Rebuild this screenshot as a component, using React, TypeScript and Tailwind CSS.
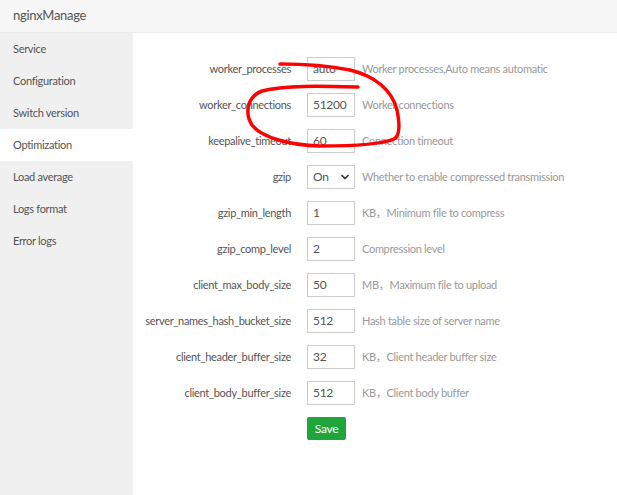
import { ChevronDown } from "lucide-react";

const menu = [
  "Service",
  "Configuration",
  "Switch version",
  "Optimization",
  "Load average",
  "Logs format",
  "Error logs",
];

const fields = [
  { name: "worker_processes", value: "auto", tip: "Worker processes,Auto means automatic" },
  { name: "worker_connections", value: "51200", tip: "Worker connections" },
  { name: "keepalive_timeout", value: "60", tip: "Connection timeout" },
  { name: "gzip", value: "On", tip: "Whether to enable compressed transmission", select: true },
  { name: "gzip_min_length", value: "1", tip: "KB，Minimum file to compress" },
  { name: "gzip_comp_level", value: "2", tip: "Compression level" },
  { name: "client_max_body_size", value: "50", tip: "MB，Maximum file to upload" },
  { name: "server_names_hash_bucket_size", value: "512", tip: "Hash table size of server name" },
  { name: "client_header_buffer_size", value: "32", tip: "KB，Client header buffer size" },
  { name: "client_body_buffer_size", value: "512", tip: "KB，Client body buffer" },
];

export default function App() {
  return (
    <div className="relative w-[617px] h-[495px] overflow-hidden bg-white font-[Lato,'Noto_Sans_CJK_SC',sans-serif] text-[11px] tracking-[-0.3px]">
      <div className="h-[33px] flex items-center px-[13px] bg-[#f7f7f7] border-b border-[#ececec] text-[13px] text-[#555]">
        nginxManage
      </div>

      <div className="flex h-[462px]">
        <div className="w-[133px] bg-[#f0f0f0] shrink-0">
          {menu.map((item) => (
            <div
              key={item}
              className={
                item === "Optimization"
                  ? "h-8 flex items-center px-[13px] bg-white text-[#555]"
                  : "h-8 flex items-center px-[13px] text-[#555]"
              }
            >
              {item}
            </div>
          ))}
        </div>

        <div className="flex-1 pt-6 flex flex-col gap-3">
          {fields.map((f) => (
            <div key={f.name} className="flex items-center h-6">
              <label className="w-[158px] text-right text-[#555]">{f.name}</label>
              <div className="ml-4 w-12 h-6 border border-[#ccc] flex items-center pl-[5px] text-[#555] text-[12px]">
                <span className="flex-1">{f.value}</span>
                {f.select && <ChevronDown size={12} strokeWidth={3.5} className="mr-[3px] text-[#333]" />}
              </div>
              <span className="ml-[7px] text-[#999]">{f.tip}</span>
            </div>
          ))}
          <div className="flex">
            <div className="w-[158px]" />
            <button className="ml-4 w-[39px] h-[23px] rounded-[2px] bg-[#20a53a] text-white text-[12px]">Save</button>
          </div>
        </div>
      </div>

      <svg className="absolute left-0 top-0 pointer-events-none" width="617" height="495">
        <path
          d="M 280 64 Q 320 64 350 70 C 375 76 392 90 397 110 C 400 125 400 136 394 139 C 380 145 350 146 320 146 C 290 145 262 138 252 125 C 244 112 248 96 262 91 C 285 85 320 86 358 87"
          fill="none"
          stroke="#ff0000"
          strokeWidth="3.5"
          strokeLinecap="round"
        />
      </svg>
    </div>
  );
}
